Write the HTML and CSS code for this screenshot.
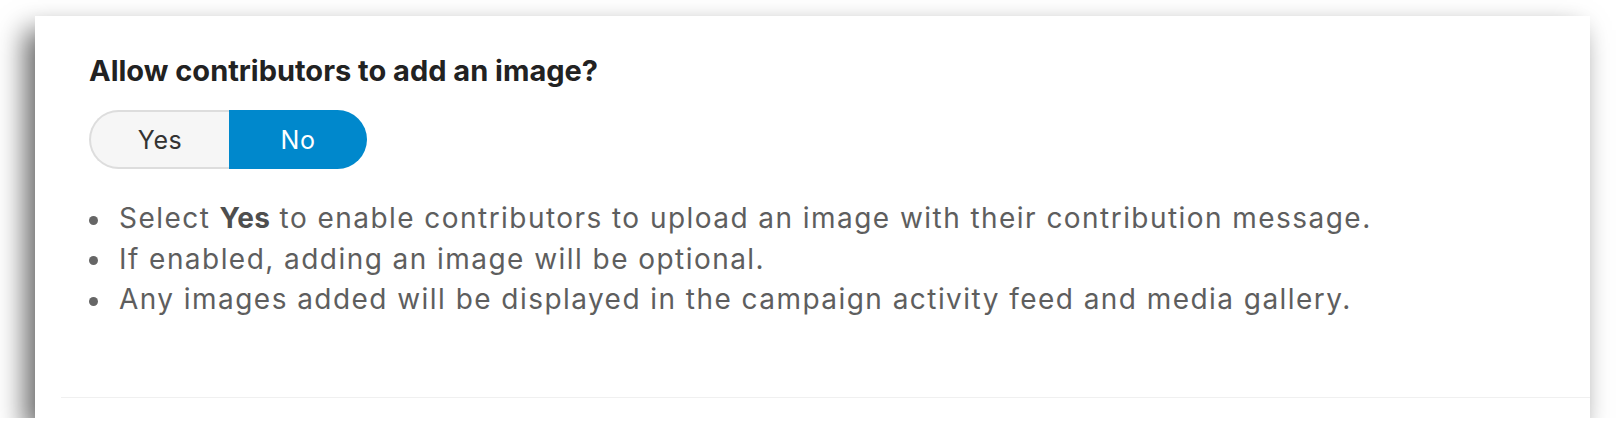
FILE: index.html
```html
<!DOCTYPE html>
<html lang="en">
<head>
    <meta charset="UTF-8" />
    <meta name="viewport" content="width=device-width, initial-scale=1" />
    <title>Contribution settings</title>
    <link rel="stylesheet" href="styles.css">
</head>
<body>
    <div class="card">
        <div class="setting">
            <h2 class="setting-title">Allow contributors to add an image?</h2>

            <div class="toggle">
                <button type="button" class="toggle-btn">Yes</button>
                <button type="button" class="toggle-btn active">No</button>
            </div>

            <ul class="help-list">
                <li>Select <strong>Yes</strong> to enable contributors to upload an image with their contribution message.</li>
                <li>If enabled, adding an image will be optional.</li>
                <li>Any images added will be displayed in the campaign activity feed and media gallery.</li>
            </ul>
        </div>
    </div>
</body>
</html>
```

FILE: styles.css
```css
body {
    margin: 0;
    background: #fff;
    font-family: Inter, "Open Sans", sans-serif;
}
.card {
    width: 1555px;
    height: 402px;
    margin: 16px 0 0 35px;
    background: #fff;
    box-shadow: -10px 14px 26px rgba(0, 0, 0, 0.6);
    box-sizing: border-box;
    padding-bottom: 20px;
}
.setting {
    margin-left: 26px;
    padding: 37px 0 0 28px;
    height: 100%;
    box-sizing: border-box;
    border-bottom: 1px solid #f0f0f0;
}
.setting-title {
    margin: 0;
    font-size: 29px;
    line-height: 36px;
    font-weight: 700;
    color: #222;
}
.toggle {
    display: flex;
    width: 278px;
    height: 59px;
    margin-top: 21px;
}
.toggle-btn {
    flex: 1;
    font-family: inherit;
    font-size: 25px;
    letter-spacing: 0.5px;
    color: #333;
    background: #f6f6f6;
    border: 2px solid #ddd;
    border-right: none;
    border-radius: 30px 0 0 30px;
    padding: 0;
}
.toggle-btn.active {
    background: #0088cc;
    color: #fff;
    border: none;
    border-radius: 0 30px 30px 0;
}
.help-list {
    list-style: none;
    margin: 29px 0 0;
    padding: 0;
    font-size: 28px;
    line-height: 40.5px;
    letter-spacing: 1.45px;
    color: #5e5e5e;
}
.help-list li {
    padding-left: 30px;
}
.help-list li::before {
    content: "";
    display: inline-block;
    width: 9px;
    height: 9px;
    margin: 0 21px 0 -30px;
    border-radius: 50%;
    background: #666;
    vertical-align: middle;
}
.help-list strong {
    color: #4e4e4e;
    letter-spacing: 0.3px;
}
```
